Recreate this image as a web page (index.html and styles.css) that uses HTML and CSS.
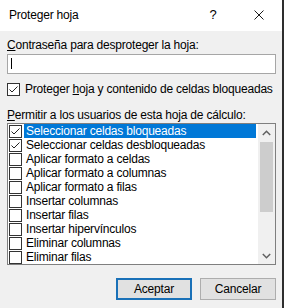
FILE: index.html
```html
<!DOCTYPE html>
<html lang="es">
<head>
<meta charset="utf-8">
<title>Proteger hoja</title>
<link rel="stylesheet" href="styles.css">
</head>
<body>
<div class="dialog">
  <div class="titlebar">
    <span class="title">Proteger hoja</span>
    <span class="tb-btn help">?</span>
    <span class="tb-btn close"><svg width="10" height="10" viewBox="0 0 10 10"><path d="M0.5 0.5 L9.5 9.5 M9.5 0.5 L0.5 9.5" stroke="#1a1a1a" stroke-width="1" fill="none"/></svg></span>
  </div>
  <div class="body">
    <div class="label"><u>C</u>ontraseña para desproteger la hoja:</div>
    <div class="textbox"><span class="caret"></span></div>
    <div class="check-row">
      <span class="cb"><svg width="11" height="11" viewBox="0 0 11 11"><path d="M1.5 5.5 L4 8 L9.5 2.5" stroke="#222" stroke-width="1" fill="none"/></svg></span>
      <span class="cb-label">Proteger <u>h</u>oja y contenido de celdas bloqueadas</span>
    </div>
    <div class="label"><u>P</u>ermitir a los usuarios de esta hoja de cálculo:</div>
    <div class="list">
      <div class="items">
        <div class="item selected"><span class="cb"><svg width="11" height="11" viewBox="0 0 11 11"><path d="M1.5 5.5 L4 8 L9.5 2.5" stroke="#222" stroke-width="1" fill="none"/></svg></span><span class="item-text">Seleccionar celdas bloqueadas</span></div>
        <div class="item"><span class="cb"><svg width="11" height="11" viewBox="0 0 11 11"><path d="M1.5 5.5 L4 8 L9.5 2.5" stroke="#222" stroke-width="1" fill="none"/></svg></span><span class="item-text">Seleccionar celdas desbloqueadas</span></div>
        <div class="item"><span class="cb"></span><span class="item-text">Aplicar formato a celdas</span></div>
        <div class="item"><span class="cb"></span><span class="item-text">Aplicar formato a columnas</span></div>
        <div class="item"><span class="cb"></span><span class="item-text">Aplicar formato a filas</span></div>
        <div class="item"><span class="cb"></span><span class="item-text">Insertar columnas</span></div>
        <div class="item"><span class="cb"></span><span class="item-text">Insertar filas</span></div>
        <div class="item"><span class="cb"></span><span class="item-text">Insertar hipervínculos</span></div>
        <div class="item"><span class="cb"></span><span class="item-text">Eliminar columnas</span></div>
        <div class="item"><span class="cb"></span><span class="item-text">Eliminar filas</span></div>
      </div>
      <div class="scrollbar">
        <div class="sb-arrow"><svg width="9" height="6" viewBox="0 0 9 6"><path d="M0.8 5 L4.5 1.3 L8.2 5" stroke="#606060" stroke-width="1.5" fill="none"/></svg></div>
        <div class="sb-track"><div class="sb-thumb"></div></div>
        <div class="sb-arrow"><svg width="9" height="6" viewBox="0 0 9 6"><path d="M0.8 1 L4.5 4.7 L8.2 1" stroke="#606060" stroke-width="1.5" fill="none"/></svg></div>
      </div>
    </div>
    <div class="buttons">
      <button class="btn default">Aceptar</button>
      <button class="btn">Cancelar</button>
    </div>
  </div>
</div>
</body>
</html>
```

FILE: styles.css
```css
html, body {
  margin: 0;
  padding: 0;
  background: #ffffff;
}
body {
  width: 289px;
  height: 308px;
  overflow: hidden;
  font-family: "Liberation Sans", Arial, sans-serif;
  font-size: 12px;
  letter-spacing: -0.2px;
  color: #000;
}
.dialog {
  width: 282px;
  height: 308px;
  border-right: 2px solid #2e2e2e;
  display: flex;
  flex-direction: column;
}
.titlebar {
  height: 31px;
  background: #ffffff;
  display: flex;
  align-items: flex-start;
}
.title {
  flex: 1;
  padding: 7px 0 0 9px;
  line-height: 16px;
}
.tb-btn {
  width: 46px;
  height: 31px;
  display: flex;
  align-items: center;
  justify-content: center;
}
.help {
  font-size: 13px;
  padding-bottom: 2px;
  box-sizing: border-box;
}
.close svg {
  display: block;
  margin-top: -1px;
}
.body {
  flex: 1;
  background: #f0f0f0;
  padding: 6px 6px 0 7px;
  display: flex;
  flex-direction: column;
  align-items: stretch;
}
.label {
  line-height: 16px;
  height: 16px;
  white-space: nowrap;
}
.textbox {
  margin-top: 1px;
  height: 18px;
  background: #fff;
  border: 1px solid #a6a6a6;
  padding-left: 3px;
}
.caret {
  display: block;
  width: 1px;
  height: 11px;
  margin-top: 3px;
  background: #000;
}
.check-row {
  margin-top: 8px;
  margin-bottom: 11px;
  height: 14px;
  display: grid;
  grid-template-columns: 13px 1fr;
  column-gap: 5px;
  align-items: center;
  justify-items: start;
}
.cb {
  width: 11px;
  height: 11px;
  border: 1px solid #333;
  background: #fff;
  flex: none;
  display: block;
}
.cb svg {
  display: block;
}
.cb-label {
  line-height: 14px;
  white-space: nowrap;
}
.list {
  height: 140px;
  border: 1px solid #7f7f7f;
  background: #fff;
  display: flex;
}
.items {
  flex: 1;
  display: flex;
  flex-direction: column;
}
.item {
  height: 14px;
  display: flex;
  align-items: center;
}
.item .cb {
  margin-left: 1px;
}
.item-text {
  margin-left: 2px;
  margin-right: 2px;
  padding-left: 2px;
  flex: 1;
  height: 14px;
  line-height: 14px;
  white-space: nowrap;
}
.item.selected .item-text {
  background: #0078d7;
  color: #fff;
}
.scrollbar {
  width: 17px;
  background: #f0f0f0;
  display: flex;
  flex-direction: column;
}
.sb-arrow {
  height: 17px;
  display: flex;
  align-items: center;
  justify-content: center;
}
.sb-arrow svg {
  display: block;
}
.sb-track {
  flex: 1;
}
.sb-thumb {
  margin: 1px 2px 0 2px;
  height: 70px;
  background: #cdcdcd;
}
.buttons {
  margin-top: 13px;
  display: flex;
  justify-content: flex-end;
  gap: 8px;
}
.btn {
  width: 76px;
  height: 22px;
  font-family: inherit;
  font-size: 12px;
  letter-spacing: inherit;
  color: #000;
  background: #e1e1e1;
  border: 1px solid #adadad;
  padding: 0;
  margin: 0;
  line-height: 18px;
}
.btn.default {
  border: 2px solid #1a71b8;
}
```
